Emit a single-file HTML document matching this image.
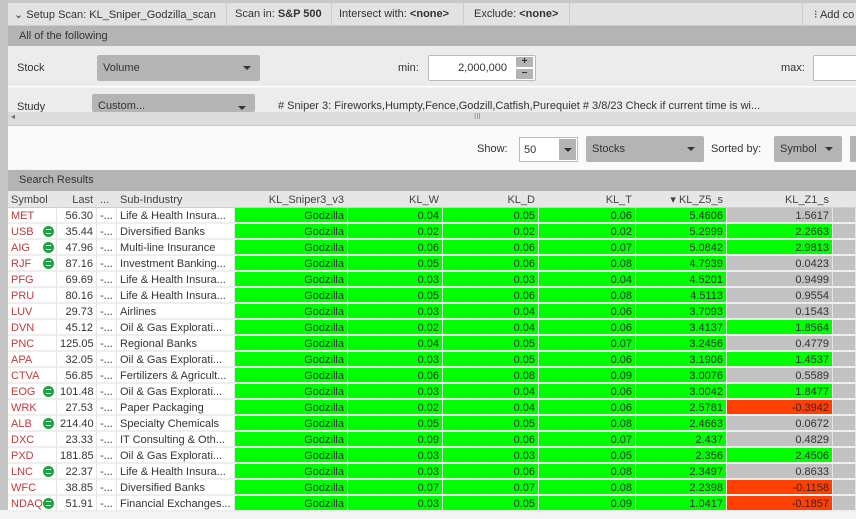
<!DOCTYPE html>
<html><head><meta charset="utf-8"><style>
*{box-sizing:border-box;margin:0;padding:0}
body{width:856px;height:519px;overflow:hidden;background:#f4f4f4;font-family:"Liberation Sans",sans-serif;font-size:11px;color:#333;position:relative}
.a{position:absolute}
.strip{left:0;top:0;width:8px;height:510px;background:#c6c6c6}
.tb{left:8px;top:3px;width:848px;height:23px;background:#e2e2e2;border-bottom:1px solid #ccc}
.tb span{position:absolute;top:5px;white-space:nowrap;color:#333}
.sep{position:absolute;top:0;width:1px;height:22px;background:#ccc}
.bar{background:#b4b4b4;left:8px;width:848px}
.dd{background:#b4b4b4;border-radius:2px;color:#333;padding:7px 6px 0}
.dd i{position:absolute;right:9px;top:11px;border-left:4px solid transparent;border-right:4px solid transparent;border-top:4px solid #333}
.row{position:absolute;left:8px;height:16px;display:flex}
.c{height:16px;border-right:1px solid #e4e4e4;border-bottom:2px solid #eee;padding:2px 3px 0;white-space:nowrap;overflow:hidden;line-height:13px}
.r{text-align:right}
.g{background:#00ff00;color:#333}
.gr{background:#c2c2c2}
.rd{background:#ff4000;color:#402020}
.w{background:#fff}
.sym{color:#c0393b;width:49px;position:relative}
.s{position:absolute;right:2px;top:2px;width:11px;height:11px;border-radius:50%;background:#20a040}
.s:after{content:"";position:absolute;left:3px;top:3px;width:5px;height:3px;border-top:1.5px solid #fff;border-bottom:1.5px solid #fff}
.hd .c{background:#e6e6e6;color:#444;border-bottom:1px solid #ccc;height:17px;padding-top:3px}
</style></head><body>
<div class="a strip"></div>
<div class="a" style="left:8px;top:0;width:848px;height:3px;background:#c8c8c8"></div>
<div class="a tb">
<span style="left:6px">⌄ Setup Scan: KL_Sniper_Godzilla_scan</span>
<div class="sep" style="left:218px"></div>
<span style="left:227px">Scan in: <b>S&amp;P 500</b></span>
<div class="sep" style="left:323px"></div>
<span style="left:331px">Intersect with: <b>&lt;none&gt;</b></span>
<div class="sep" style="left:455px"></div>
<span style="left:466px">Exclude: <b>&lt;none&gt;</b></span>
<div class="sep" style="left:561px"></div>
<div class="sep" style="left:794px"></div>
<span style="left:806px">⁝ Add co</span>
</div>
<div class="a bar" style="top:26px;height:20px"><span class="a" style="left:11px;top:4px">All of the following</span></div>
<div class="a" style="left:8px;top:46px;width:848px;height:41px;background:#ececec;border-bottom:1px solid #fff"></div>
<span class="a" style="left:17px;top:62px">Stock</span>
<div class="a dd" style="left:97px;top:55px;width:163px;height:26px">Volume<i></i></div>
<span class="a" style="left:398px;top:62px">min:</span>
<div class="a" style="left:428px;top:55px;width:108px;height:26px;background:#fff;border:1px solid #bbb;border-radius:2px"><span class="a" style="right:28px;top:6px">2,000,000</span>
<div class="a" style="right:2px;top:1px;width:17px;height:10px;background:#b4b4b4;font-size:10px;text-align:center;line-height:10px;font-weight:bold">+</div>
<div class="a" style="right:2px;top:13px;width:17px;height:10px;background:#b4b4b4;font-size:10px;text-align:center;line-height:10px;font-weight:bold">−</div></div>
<span class="a" style="left:781px;top:62px">max:</span>
<div class="a" style="left:813px;top:55px;width:50px;height:26px;background:#fff;border:1px solid #bbb;border-radius:2px"></div>
<div class="a" style="left:8px;top:88px;width:848px;height:24px;background:#ececec"></div>
<span class="a" style="left:17px;top:101px">Study</span>
<div class="a dd" style="left:92px;top:94px;width:163px;height:18px;padding-top:6px">Custom...<i style="top:12px"></i></div>
<span class="a" style="left:278px;top:100px;white-space:nowrap">#&nbsp;Sniper 3: Fireworks,Humpty,Fence,Godzill,Catfish,Purequiet # 3/8/23 Check if current time is wi...</span>
<div class="a" style="left:8px;top:112px;width:848px;height:14px;background:#dcdcdc;border-bottom:1px solid #ccc"><span class="a" style="left:3px;top:0;font-size:8px;color:#666">◂</span><span class="a" style="left:466px;top:0;font-size:8px;color:#888">III</span></div>
<div class="a" style="left:8px;top:127px;width:848px;height:42px;background:#fafafa"></div>
<span class="a" style="left:477px;top:143px">Show:</span>
<div class="a" style="left:519px;top:137px;width:59px;height:25px;background:#fff;border:1px solid #bbb"><span class="a" style="left:4px;top:6px">50</span><div class="a" style="right:1px;top:1px;width:17px;height:21px;background:#b4b4b4"></div><i class="a" style="right:5px;top:10px;border-left:4px solid transparent;border-right:4px solid transparent;border-top:4px solid #333"></i></div>
<div class="a dd" style="left:586px;top:136px;width:118px;height:26px;padding-top:7px">Stocks<i></i></div>
<span class="a" style="left:711px;top:143px">Sorted by:</span>
<div class="a dd" style="left:774px;top:136px;width:68px;height:26px;padding-top:7px">Symbol<i></i></div>
<div class="a" style="left:850px;top:136px;width:8px;height:26px;background:#b4b4b4"></div>
<div class="a bar" style="top:170px;height:21px"><span class="a" style="left:11px;top:4px">Search Results</span></div>

<div class="row hd" style="top:191px"><div class="c" style="width:49px">Symbol</div><div class="c r" style="width:40px">Last</div><div class="c" style="width:20px">...</div><div class="c" style="width:118px">Sub-Industry</div><div class="c r" style="width:113px">KL_Sniper3_v3</div><div class="c r" style="width:95px">KL_W</div><div class="c r" style="width:96px">KL_D</div><div class="c r" style="width:97px">KL_T</div><div class="c r" style="width:91px">▾ KL_Z5_s</div><div class="c r" style="width:106px">KL_Z1_s</div><div class="c" style="width:23px"></div></div>

<div class="row" style="top:208px"><div class="c w sym">MET</div><div class="c w r" style="width:40px">56.30</div><div class="c w" style="width:20px">-...</div><div class="c w" style="width:118px">Life &amp; Health Insura...</div><div class="c g r" style="width:113px">Godzilla</div><div class="c g r" style="width:95px">0.04</div><div class="c g r" style="width:96px">0.05</div><div class="c g r" style="width:97px">0.06</div><div class="c g r" style="width:91px">5.4606</div><div class="c gr r" style="width:106px">1.5617</div><div class="c gr" style="width:23px"></div></div>
<div class="row" style="top:224px"><div class="c w sym">USB<span class="s"></span></div><div class="c w r" style="width:40px">35.44</div><div class="c w" style="width:20px">-...</div><div class="c w" style="width:118px">Diversified Banks</div><div class="c g r" style="width:113px">Godzilla</div><div class="c g r" style="width:95px">0.02</div><div class="c g r" style="width:96px">0.02</div><div class="c g r" style="width:97px">0.02</div><div class="c g r" style="width:91px">5.2999</div><div class="c g r" style="width:106px">2.2663</div><div class="c gr" style="width:23px"></div></div>
<div class="row" style="top:240px"><div class="c w sym">AIG<span class="s"></span></div><div class="c w r" style="width:40px">47.96</div><div class="c w" style="width:20px">-...</div><div class="c w" style="width:118px">Multi-line Insurance</div><div class="c g r" style="width:113px">Godzilla</div><div class="c g r" style="width:95px">0.06</div><div class="c g r" style="width:96px">0.06</div><div class="c g r" style="width:97px">0.07</div><div class="c g r" style="width:91px">5.0842</div><div class="c g r" style="width:106px">2.9813</div><div class="c gr" style="width:23px"></div></div>
<div class="row" style="top:256px"><div class="c w sym">RJF<span class="s"></span></div><div class="c w r" style="width:40px">87.16</div><div class="c w" style="width:20px">-...</div><div class="c w" style="width:118px">Investment Banking...</div><div class="c g r" style="width:113px">Godzilla</div><div class="c g r" style="width:95px">0.05</div><div class="c g r" style="width:96px">0.06</div><div class="c g r" style="width:97px">0.08</div><div class="c g r" style="width:91px">4.7939</div><div class="c gr r" style="width:106px">0.0423</div><div class="c gr" style="width:23px"></div></div>
<div class="row" style="top:272px"><div class="c w sym">PFG</div><div class="c w r" style="width:40px">69.69</div><div class="c w" style="width:20px">-...</div><div class="c w" style="width:118px">Life &amp; Health Insura...</div><div class="c g r" style="width:113px">Godzilla</div><div class="c g r" style="width:95px">0.03</div><div class="c g r" style="width:96px">0.03</div><div class="c g r" style="width:97px">0.04</div><div class="c g r" style="width:91px">4.5201</div><div class="c gr r" style="width:106px">0.9499</div><div class="c gr" style="width:23px"></div></div>
<div class="row" style="top:288px"><div class="c w sym">PRU</div><div class="c w r" style="width:40px">80.16</div><div class="c w" style="width:20px">-...</div><div class="c w" style="width:118px">Life &amp; Health Insura...</div><div class="c g r" style="width:113px">Godzilla</div><div class="c g r" style="width:95px">0.05</div><div class="c g r" style="width:96px">0.06</div><div class="c g r" style="width:97px">0.08</div><div class="c g r" style="width:91px">4.5113</div><div class="c gr r" style="width:106px">0.9554</div><div class="c gr" style="width:23px"></div></div>
<div class="row" style="top:304px"><div class="c w sym">LUV</div><div class="c w r" style="width:40px">29.73</div><div class="c w" style="width:20px">-...</div><div class="c w" style="width:118px">Airlines</div><div class="c g r" style="width:113px">Godzilla</div><div class="c g r" style="width:95px">0.03</div><div class="c g r" style="width:96px">0.04</div><div class="c g r" style="width:97px">0.06</div><div class="c g r" style="width:91px">3.7093</div><div class="c gr r" style="width:106px">0.1543</div><div class="c gr" style="width:23px"></div></div>
<div class="row" style="top:320px"><div class="c w sym">DVN</div><div class="c w r" style="width:40px">45.12</div><div class="c w" style="width:20px">-...</div><div class="c w" style="width:118px">Oil &amp; Gas Explorati...</div><div class="c g r" style="width:113px">Godzilla</div><div class="c g r" style="width:95px">0.02</div><div class="c g r" style="width:96px">0.04</div><div class="c g r" style="width:97px">0.06</div><div class="c g r" style="width:91px">3.4137</div><div class="c g r" style="width:106px">1.8564</div><div class="c gr" style="width:23px"></div></div>
<div class="row" style="top:336px"><div class="c w sym">PNC</div><div class="c w r" style="width:40px">125.05</div><div class="c w" style="width:20px">-...</div><div class="c w" style="width:118px">Regional Banks</div><div class="c g r" style="width:113px">Godzilla</div><div class="c g r" style="width:95px">0.04</div><div class="c g r" style="width:96px">0.05</div><div class="c g r" style="width:97px">0.07</div><div class="c g r" style="width:91px">3.2456</div><div class="c gr r" style="width:106px">0.4779</div><div class="c gr" style="width:23px"></div></div>
<div class="row" style="top:352px"><div class="c w sym">APA</div><div class="c w r" style="width:40px">32.05</div><div class="c w" style="width:20px">-...</div><div class="c w" style="width:118px">Oil &amp; Gas Explorati...</div><div class="c g r" style="width:113px">Godzilla</div><div class="c g r" style="width:95px">0.03</div><div class="c g r" style="width:96px">0.05</div><div class="c g r" style="width:97px">0.06</div><div class="c g r" style="width:91px">3.1906</div><div class="c g r" style="width:106px">1.4537</div><div class="c gr" style="width:23px"></div></div>
<div class="row" style="top:368px"><div class="c w sym">CTVA</div><div class="c w r" style="width:40px">56.85</div><div class="c w" style="width:20px">-...</div><div class="c w" style="width:118px">Fertilizers &amp; Agricult...</div><div class="c g r" style="width:113px">Godzilla</div><div class="c g r" style="width:95px">0.06</div><div class="c g r" style="width:96px">0.08</div><div class="c g r" style="width:97px">0.09</div><div class="c g r" style="width:91px">3.0076</div><div class="c gr r" style="width:106px">0.5589</div><div class="c gr" style="width:23px"></div></div>
<div class="row" style="top:384px"><div class="c w sym">EOG<span class="s"></span></div><div class="c w r" style="width:40px">101.48</div><div class="c w" style="width:20px">-...</div><div class="c w" style="width:118px">Oil &amp; Gas Explorati...</div><div class="c g r" style="width:113px">Godzilla</div><div class="c g r" style="width:95px">0.03</div><div class="c g r" style="width:96px">0.04</div><div class="c g r" style="width:97px">0.06</div><div class="c g r" style="width:91px">3.0042</div><div class="c g r" style="width:106px">1.8477</div><div class="c gr" style="width:23px"></div></div>
<div class="row" style="top:400px"><div class="c w sym">WRK</div><div class="c w r" style="width:40px">27.53</div><div class="c w" style="width:20px">-...</div><div class="c w" style="width:118px">Paper Packaging</div><div class="c g r" style="width:113px">Godzilla</div><div class="c g r" style="width:95px">0.02</div><div class="c g r" style="width:96px">0.04</div><div class="c g r" style="width:97px">0.06</div><div class="c g r" style="width:91px">2.5781</div><div class="c rd r" style="width:106px">-0.3942</div><div class="c gr" style="width:23px"></div></div>
<div class="row" style="top:416px"><div class="c w sym">ALB<span class="s"></span></div><div class="c w r" style="width:40px">214.40</div><div class="c w" style="width:20px">-...</div><div class="c w" style="width:118px">Specialty Chemicals</div><div class="c g r" style="width:113px">Godzilla</div><div class="c g r" style="width:95px">0.05</div><div class="c g r" style="width:96px">0.05</div><div class="c g r" style="width:97px">0.08</div><div class="c g r" style="width:91px">2.4663</div><div class="c gr r" style="width:106px">0.0672</div><div class="c gr" style="width:23px"></div></div>
<div class="row" style="top:432px"><div class="c w sym">DXC</div><div class="c w r" style="width:40px">23.33</div><div class="c w" style="width:20px">-...</div><div class="c w" style="width:118px">IT Consulting &amp; Oth...</div><div class="c g r" style="width:113px">Godzilla</div><div class="c g r" style="width:95px">0.09</div><div class="c g r" style="width:96px">0.06</div><div class="c g r" style="width:97px">0.07</div><div class="c g r" style="width:91px">2.437</div><div class="c gr r" style="width:106px">0.4829</div><div class="c gr" style="width:23px"></div></div>
<div class="row" style="top:448px"><div class="c w sym">PXD</div><div class="c w r" style="width:40px">181.85</div><div class="c w" style="width:20px">-...</div><div class="c w" style="width:118px">Oil &amp; Gas Explorati...</div><div class="c g r" style="width:113px">Godzilla</div><div class="c g r" style="width:95px">0.03</div><div class="c g r" style="width:96px">0.03</div><div class="c g r" style="width:97px">0.05</div><div class="c g r" style="width:91px">2.356</div><div class="c g r" style="width:106px">2.4506</div><div class="c gr" style="width:23px"></div></div>
<div class="row" style="top:464px"><div class="c w sym">LNC<span class="s"></span></div><div class="c w r" style="width:40px">22.37</div><div class="c w" style="width:20px">-...</div><div class="c w" style="width:118px">Life &amp; Health Insura...</div><div class="c g r" style="width:113px">Godzilla</div><div class="c g r" style="width:95px">0.03</div><div class="c g r" style="width:96px">0.06</div><div class="c g r" style="width:97px">0.08</div><div class="c g r" style="width:91px">2.3497</div><div class="c gr r" style="width:106px">0.8633</div><div class="c gr" style="width:23px"></div></div>
<div class="row" style="top:480px"><div class="c w sym">WFC</div><div class="c w r" style="width:40px">38.85</div><div class="c w" style="width:20px">-...</div><div class="c w" style="width:118px">Diversified Banks</div><div class="c g r" style="width:113px">Godzilla</div><div class="c g r" style="width:95px">0.07</div><div class="c g r" style="width:96px">0.07</div><div class="c g r" style="width:97px">0.08</div><div class="c g r" style="width:91px">2.2398</div><div class="c rd r" style="width:106px">-0.1158</div><div class="c gr" style="width:23px"></div></div>
<div class="row" style="top:496px"><div class="c w sym">NDAQ<span class="s"></span></div><div class="c w r" style="width:40px">51.91</div><div class="c w" style="width:20px">-...</div><div class="c w" style="width:118px">Financial Exchanges...</div><div class="c g r" style="width:113px">Godzilla</div><div class="c g r" style="width:95px">0.03</div><div class="c g r" style="width:96px">0.05</div><div class="c g r" style="width:97px">0.09</div><div class="c g r" style="width:91px">1.0417</div><div class="c rd r" style="width:106px">-0.1857</div><div class="c gr" style="width:23px"></div></div>
</body></html>
